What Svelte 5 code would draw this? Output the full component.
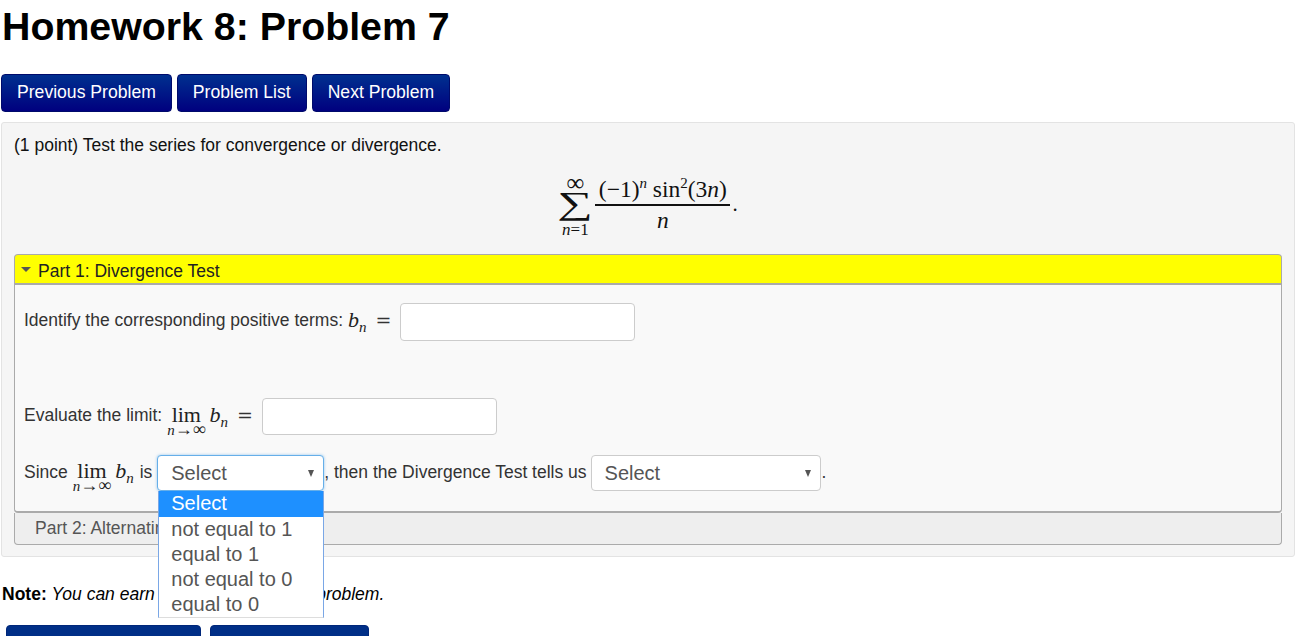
<script>
	const navButtons = ['Previous Problem', 'Problem List', 'Next Problem'];
	const options = ['Select', 'not equal to 1', 'equal to 1', 'not equal to 0', 'equal to 0'];
</script>

<main>
	<h1>Homework 8: Problem 7</h1>

	<nav>
		{#each navButtons as label}
			<button class="nav-btn">{label}</button>
		{/each}
	</nav>

	<section class="problem">
		<p class="intro">(1 point) Test the series for convergence or divergence.</p>

		<div class="display-math">
			<span class="sum">
				<span class="sum-top">∞</span>
				<span class="sigma">∑</span>
				<span class="sum-bottom"><i>n</i>=1</span>
			</span>
			<span class="fraction">
				<span class="numer">(−1)<sup><i>n</i></sup> sin<sup>2</sup>(3<i>n</i>)</span>
				<span class="denom"><i>n</i></span>
			</span>
			<span class="dot">.</span>
		</div>

		<div class="part-head open">
			<span class="caret"></span>
			<span class="part-title">Part 1: Divergence Test</span>
		</div>
		<div class="part-body">
			<div class="row first">
				<span class="lift">Identify the corresponding positive terms:</span>
				<span class="math lift"><i>b<sub>n</sub></i><span class="eq">=</span></span>
				<input class="answer" type="text" />
			</div>

			<div class="row second">
				<span class="nudge">Evaluate the limit:</span>
				<span class="math lift">
					<span class="lim">lim<span class="under"><i>n</i><span class="big">→∞</span></span></span>
					<i>b<sub>n</sub></i><span class="eq">=</span>
				</span>
				<input class="answer" type="text" />
			</div>

			<div class="row third">
				<span class="nudge">Since</span>
				<span class="math lift since-lim">
					<span class="lim">lim<span class="under"><i>n</i><span class="big">→∞</span></span></span>
					<i>b<sub>n</sub></i>
				</span>
				<span class="nudge is">is</span>
				<div class="select-wrap">
					<div class="select focused">Select<span class="arrow"></span></div>
					<ul class="menu">
						{#each options as option, i}
							<li class:active={i === 0}>{option}</li>
						{/each}
					</ul>
				</div>
				<span class="nudge after-first">, then the Divergence Test tells us</span>
				<div class="select wide">Select<span class="arrow"></span></div>
				<span class="nudge end">.</span>
			</div>
		</div>
		<div class="part-head closed">Part 2: Alternating Series Test</div>
	</section>

	<p class="note"><b>Note:</b> <em>You can earn partial credit on this problem.</em></p>

	<div class="actions">
		<button class="submit preview">Preview My Answers</button>
		<button class="submit send">Submit Answers</button>
	</div>
</main>

<style>
	:global(body) {
		overflow: hidden;
		background: #fff;
	}

	main {
		font-family: 'Liberation Sans', Arial, sans-serif;
		font-size: 17.5px;
		color: #222;
		height: 636px;
		overflow: hidden;
	}

	h1 {
		margin: 0;
		padding: 6px 0 0 2px;
		font-size: 39.3px;
		line-height: 40px;
		font-weight: bold;
		color: #000;
	}

	nav {
		display: flex;
		gap: 5px;
		margin: 28px 0 10px 1px;
	}

	.nav-btn {
		height: 38px;
		padding: 0 15px 2px;
		font: 17.6px 'Liberation Sans', Arial, sans-serif;
		color: #fff;
		background: linear-gradient(#00308f, #00007f);
		border: 1px solid #000a6b;
		border-radius: 4px;
	}

	.problem {
		margin: 0 5px 0 1px;
		padding: 12px 12px 12px 12px;
		background: #f5f5f5;
		border: 1px solid #e3e3e3;
		border-radius: 3px;
		height: 435px;
		box-sizing: border-box;
	}

	.intro {
		margin: 0;
		line-height: 20px;
		color: #111;
	}

	.display-math {
		display: flex;
		justify-content: center;
		align-items: flex-start;
		height: 99px;
		padding-left: 1px;
		font-family: 'Liberation Serif', 'Times New Roman', serif;
		color: #111;
	}

	.sum {
		display: flex;
		flex-direction: column;
		align-items: center;
		width: 32px;
		margin-top: 22px;
		margin-right: 4px;
		line-height: 1;
	}

	.sum-top {
		font-size: 25px;
		height: 11px;
		line-height: 11px;
	}

	.sigma {
		font-size: 40px;
		line-height: 32px;
		height: 32px;
		transform: scale(1.25, 0.8);
	}

	.sum-bottom {
		font-size: 17px;
		line-height: 14px;
		margin-top: 3px;
		white-space: nowrap;
	}

	.fraction {
		display: flex;
		flex-direction: column;
		align-items: center;
		width: 135px;
		margin-top: 22px;
	}

	.numer {
		font-size: 23.5px;
		line-height: 25px;
		height: 27px;
		border-bottom: 2px solid #111;
		width: 100%;
		text-align: center;
		white-space: nowrap;
	}

	.numer sup {
		font-size: 15px;
		line-height: 0;
	}

	.denom {
		font-size: 23.5px;
		line-height: 28px;
	}

	.dot {
		font-size: 21px;
		margin-top: 37px;
		margin-left: 2px;
	}

	.part-head {
		box-sizing: border-box;
		display: flex;
		align-items: center;
		border: 1px solid #aaa;
	}

	.part-head.open {
		height: 31px;
		padding-left: 6px;
		gap: 7px;
		background: #ff0;
		border-bottom-width: 2px;
		border-radius: 4px 4px 0 0;
		color: #222;
	}

	.part-title {
		padding-top: 5px;
	}

	.caret {
		width: 0;
		height: 0;
		border-left: 5.5px solid transparent;
		border-right: 5.5px solid transparent;
		border-top: 5px solid #555;
	}

	.part-body {
		box-sizing: border-box;
		height: 228px;
		padding: 18px 9px 0;
		background: #f9f9f9;
		border: 1px solid #aaa;
		border-top: 0;
		border-bottom: 2px solid #aaa;
		border-radius: 0 0 4px 4px;
		color: #333;
	}

	.part-head.closed {
		height: 32px;
		padding-left: 20px;
		background: #eee;
		border-radius: 0 0 4px 4px;
		border-top: 0;
		color: #555;
	}

	.row {
		display: flex;
		align-items: center;
		white-space: nowrap;
	}

	.row.first {
		height: 38px;
		gap: 5px;
		margin-bottom: 57px;
	}

	.row.second {
		height: 37px;
		gap: 5px;
		margin-bottom: 20px;
	}

	.row.third {
		height: 36px;
		gap: 4px;
	}

	.lift {
		margin-bottom: 4px;
	}

	.nudge {
		margin-bottom: 2px;
	}

	.math {
		display: inline-flex;
		align-items: center;
		font-family: 'Liberation Serif', 'Times New Roman', serif;
		font-size: 22px;
		color: #222;
	}

	.since-lim {
		margin-left: 1px;
	}

	.math sub {
		font-size: 15px;
		line-height: 0;
	}

	.eq {
		margin: 0 4px 0 9px;
		font-family: 'DejaVu Serif', serif;
		font-size: 19px;
		color: #333;
	}

	.lim {
		display: inline-flex;
		flex-direction: column;
		align-items: center;
		line-height: 20px;
		margin-right: 4px;
	}

	.under {
		font-size: 15px;
		line-height: 14px;
		height: 14px;
		margin-top: -3px;
		margin-bottom: -11px;
		white-space: nowrap;
	}

	.big {
		font-size: 18px;
	}

	.is {
		margin-left: 2px;
		margin-right: 1px;
	}

	.answer {
		box-sizing: border-box;
		width: 235px;
		height: 100%;
		background: #fff;
		border: 1px solid #ccc;
		border-radius: 4px;
	}

	.select-wrap {
		position: relative;
	}

	.select {
		box-sizing: border-box;
		position: relative;
		width: 167px;
		height: 36px;
		padding-left: 13px;
		font-size: 20px;
		line-height: 35px;
		color: #555;
		background: #fff;
		border: 1px solid #ccc;
		border-radius: 4px;
	}

	.select.focused {
		border-color: #66afe9;
		box-shadow: 0 0 3px rgba(102, 175, 233, 0.7);
	}

	.select.wide {
		width: 230px;
	}

	.arrow {
		position: absolute;
		right: 9px;
		top: 14px;
		border-left: 3.5px solid transparent;
		border-right: 3.5px solid transparent;
		border-top: 7px solid #555;
	}

	.after-first {
		margin-left: -4px;
	}

	.end {
		margin-left: -3px;
	}

	.menu {
		position: absolute;
		left: 1px;
		top: 36px;
		z-index: 2;
		box-sizing: border-box;
		width: 166px;
		height: 127px;
		margin: 0;
		padding: 0;
		list-style: none;
		overflow: hidden;
		background: #fff;
		border: 1px solid #7aa7e6;
		border-top: 0;
		border-bottom: 1px solid #ddd;
		font-size: 20px;
		line-height: 25px;
		color: #555;
	}

	.menu li {
		padding-left: 12px;
	}

	.menu li.active {
		height: 26px;
		background: #1e90ff;
		color: #fff;
	}

	.note {
		margin: 27px 0 0 2px;
		font-size: 17.5px;
		line-height: 20px;
		color: #000;
	}

	.actions {
		display: flex;
		gap: 9px;
		margin: 21px 0 0 6px;
	}

	.submit {
		height: 38px;
		font: 17.5px 'Liberation Sans', Arial, sans-serif;
		color: #fff;
		background: #002f87;
		border: 1px solid #00277a;
		border-radius: 4px;
	}

	.preview {
		width: 195px;
	}

	.send {
		width: 159px;
	}
</style>
